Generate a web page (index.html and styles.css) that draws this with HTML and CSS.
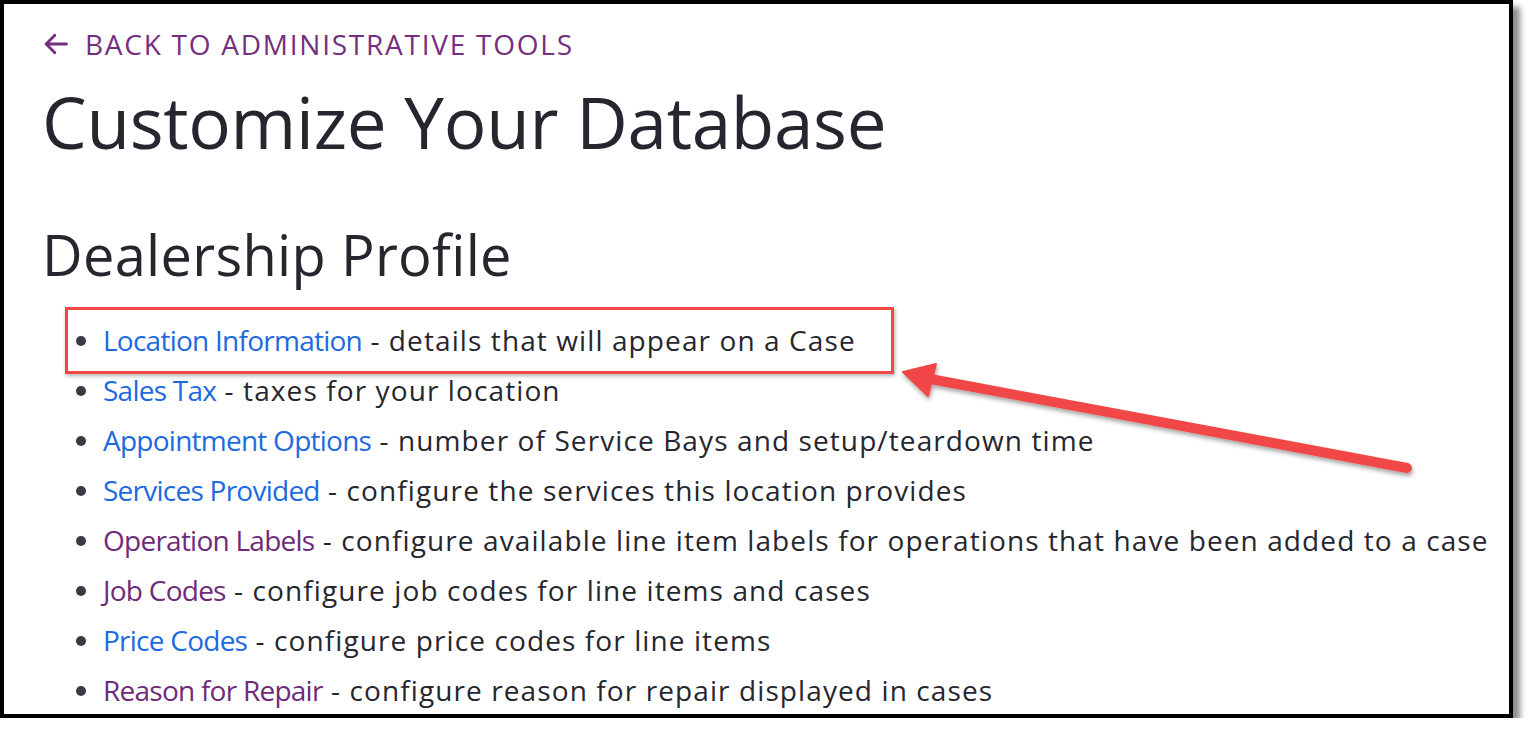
FILE: index.html
```html
<!DOCTYPE html>
<html>
<head>
<meta charset="utf-8">
<link rel="stylesheet" href="styles.css">
</head>
<body>
<div class="frame">
  <div class="page">
    <a class="back" href="#">
      <svg class="back-icon" viewBox="0 0 24 24" width="28" height="28"><path d="M21 12H4M11 4.5L3.5 12l7.5 7.5" fill="none" stroke="currentColor" stroke-width="2.4" stroke-linecap="round" stroke-linejoin="round"/></svg>
      <span>BACK TO ADMINISTRATIVE TOOLS</span>
    </a>
    <h1>Customize Your Database</h1>
    <h2>Dealership Profile</h2>
    <ul class="list">
      <li><a class="link">Location Information</a> - details that will appear on a Case</li>
      <li><a class="link">Sales Tax</a> - taxes for your location</li>
      <li><a class="link">Appointment Options</a> - number of Service Bays and setup/teardown time</li>
      <li><a class="link">Services Provided</a> - configure the services this location provides</li>
      <li><a class="link visited">Operation Labels</a> - configure available line item labels for operations that have been added to a case</li>
      <li><a class="link visited">Job Codes</a> - configure job codes for line items and cases</li>
      <li><a class="link">Price Codes</a> - configure price codes for line items</li>
      <li><a class="link visited">Reason for Repair</a> - configure reason for repair displayed in cases</li>
    </ul>
  </div>
  <div class="highlight"></div>
  <svg class="arrow" width="1529" height="734" viewBox="0 0 1529 734">
    <defs>
      <filter id="sh" x="-10%" y="-10%" width="120%" height="130%">
        <feDropShadow dx="1" dy="3" stdDeviation="2" flood-color="#000" flood-opacity="0.35"/>
      </filter>
    </defs>
    <g filter="url(#sh)" fill="#f24747" stroke="#f24747">
      <line x1="1407" y1="468" x2="925" y2="378" stroke-width="10" stroke-linecap="round"/>
      <polygon points="903,372 936,364 928,396" stroke-width="2" stroke-linejoin="round"/>
    </g>
  </svg>
</div>
</body>
</html>
```
FILE: styles.css
```css
html, body {
  margin: 0;
  padding: 0;
  background: #ffffff;
}
.frame {
  position: relative;
  width: 1513px;
  height: 718px;
  box-sizing: border-box;
  border: 4px solid #000;
  background: #fff;
  box-shadow: 7px 7px 6px rgba(0, 0, 0, 0.45);
  overflow: hidden;
}
.page {
  padding: 22px 0 0 38px;
  font-family: "Open Sans", "DejaVu Sans", sans-serif;
  color: #26262e;
}
.back {
  display: flex;
  align-items: center;
  gap: 15px;
  color: #74307e;
  text-decoration: none;
  font-size: 28px;
  letter-spacing: 1.75px;
  height: 36px;
}
.back-icon {
  color: #74307e;
}
h1 {
  margin: 10px 0 0 0;
  font-size: 71px;
  font-weight: 400;
  letter-spacing: -0.3px;
  line-height: 100px;
}
h2 {
  margin: 47px 0 0 0;
  font-size: 56px;
  font-weight: 400;
  letter-spacing: 0.3px;
  line-height: 70px;
}
.list {
  margin: 26px 0 0 0;
  padding-left: 61px;
  font-size: 28px;
  line-height: 50px;
  letter-spacing: 1.1px;
}
.list li::marker {
  color: #3a3a44;
}
.link {
  color: #1d6ae0;
  letter-spacing: -0.75px;
}
.link.visited {
  color: #6e2b78;
}
.highlight {
  position: absolute;
  left: 61px;
  top: 303px;
  width: 823px;
  height: 61px;
  border: 3px solid #f24747;
  box-shadow: 1px 2px 4px rgba(0, 0, 0, 0.3);
}
.arrow {
  position: absolute;
  left: -4px;
  top: -4px;
  pointer-events: none;
}
```
